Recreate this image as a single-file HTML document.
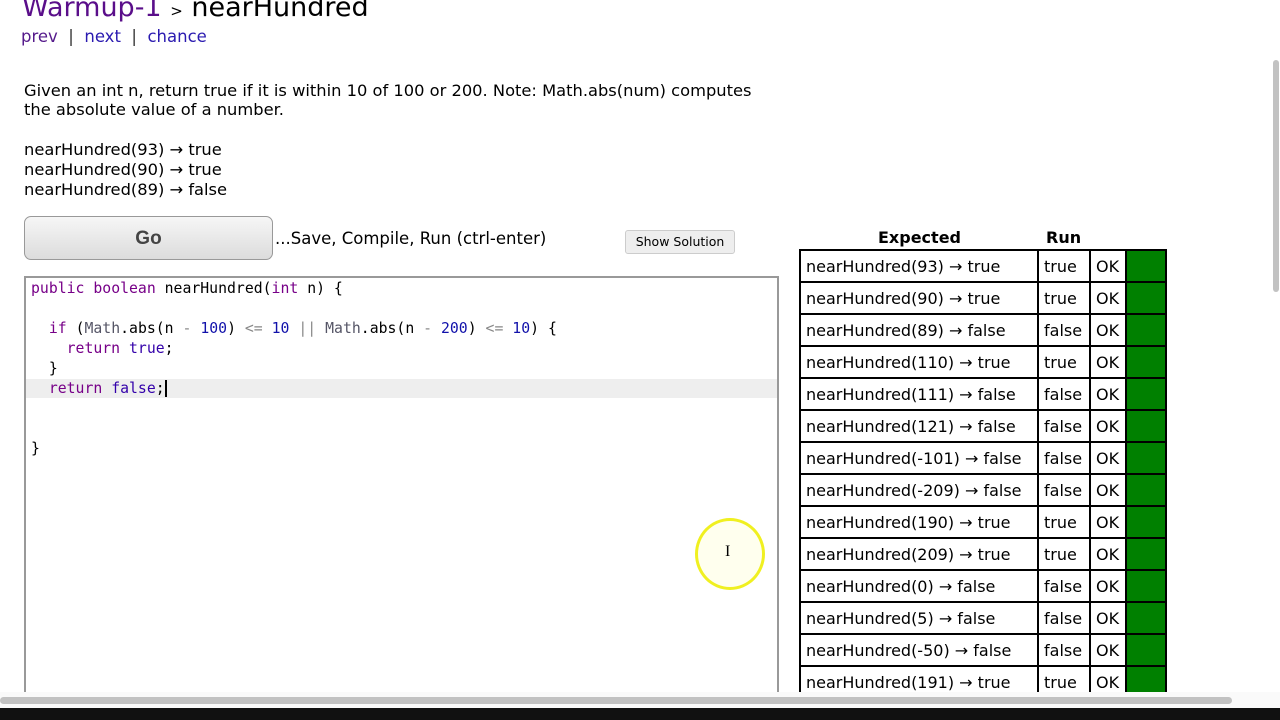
<!DOCTYPE html>
<html><head><style>
body{margin:0;width:1280px;height:720px;overflow:hidden;background:#fff;font-family:"DejaVu Sans","Liberation Sans",sans-serif;position:relative;color:#000}
.a{position:absolute;white-space:nowrap}
.code{font-family:"DejaVu Sans Mono","Liberation Mono",monospace;font-size:14.8px;color:#000}
.kw{color:#708}.num{color:#11a}.op{color:#888}.bi{color:#30a}.m{color:#556}
table{border-collapse:collapse;position:absolute;left:799px;top:249px;font-size:16px}
td{border:2px solid #000;height:30px;padding:0 5px;white-space:nowrap}
td.g{background:#008000;width:28px}
</style></head><body>
<div class="a" style="left:22px;top:-8px;font-size:27px;color:#5a0e8a">Warmup-1 <span style="font-size:15px;color:#000">&gt;</span> <span style="color:#000">nearHundred</span></div>
<div class="a" style="left:21px;top:27px;font-size:16.5px;color:#333"><span style="color:#551a8b">prev</span> &nbsp;| &nbsp;<span style="color:#2a1ab0">next</span> &nbsp;| &nbsp;<span style="color:#2a1ab0">chance</span></div>
<div class="a" style="left:24px;top:81px;font-size:16.3px;line-height:19px">Given an int n, return true if it is within 10 of 100 or 200. Note: Math.abs(num) computes<br>the absolute value of a number.</div>
<div class="a" style="left:24px;top:140px;font-size:16.3px;line-height:20px">nearHundred(93) → true<br>nearHundred(90) → true<br>nearHundred(89) → false</div>
<div class="a" style="left:24px;top:216px;width:247px;height:42px;border:1px solid #999;border-radius:7px;background:linear-gradient(#f6f6f6,#dcdcdc);text-align:center;line-height:44px;font-family:'Liberation Sans',sans-serif;font-weight:bold;font-size:19px;color:#444">Go</div>
<div class="a" style="left:275px;top:229px;font-size:16.5px">...Save, Compile, Run (ctrl-enter)</div>
<div class="a" style="left:625px;top:230px;width:108px;height:22px;border:1px solid #ccc;border-radius:3px;background:#eee;text-align:center;line-height:22px;font-size:12.5px">Show Solution</div>
<div class="a" style="left:24px;top:276px;width:751px;height:430px;border:2px solid #999;border-bottom:none"></div>
<div class="a" style="left:26px;top:379px;width:751px;height:19px;background:#eee"></div>
<div class="a code" style="left:31px;top:279px;line-height:20px;white-space:pre"><span class="kw">public</span> <span class="kw">boolean</span> nearHundred(<span class="kw">int</span> n) {

  <span class="kw">if</span> (<span class="m">Math</span>.abs(n <span class="op">-</span> <span class="num">100</span>) <span class="op">&lt;=</span> <span class="num">10</span> <span class="op">||</span> <span class="m">Math</span>.abs(n <span class="op">-</span> <span class="num">200</span>) <span class="op">&lt;=</span> <span class="num">10</span>) {
    <span class="kw">return</span> <span class="bi">true</span>;
  }
  <span class="kw">return</span> <span class="bi">false</span>;<span style="border-left:2px solid #000"></span>


}</div>
<div class="a" style="left:878px;top:228px;font-size:16px;font-weight:bold">Expected</div>
<div class="a" style="left:1046px;top:228px;font-size:16px;font-weight:bold">Run</div>
<table>
<tr><td style="width:226px">nearHundred(93) → true</td><td style="width:40px">true</td><td style="width:24px">OK</td><td class="g"></td></tr>
<tr><td>nearHundred(90) → true</td><td>true</td><td>OK</td><td class="g"></td></tr>
<tr><td>nearHundred(89) → false</td><td>false</td><td>OK</td><td class="g"></td></tr>
<tr><td>nearHundred(110) → true</td><td>true</td><td>OK</td><td class="g"></td></tr>
<tr><td>nearHundred(111) → false</td><td>false</td><td>OK</td><td class="g"></td></tr>
<tr><td>nearHundred(121) → false</td><td>false</td><td>OK</td><td class="g"></td></tr>
<tr><td>nearHundred(-101) → false</td><td>false</td><td>OK</td><td class="g"></td></tr>
<tr><td>nearHundred(-209) → false</td><td>false</td><td>OK</td><td class="g"></td></tr>
<tr><td>nearHundred(190) → true</td><td>true</td><td>OK</td><td class="g"></td></tr>
<tr><td>nearHundred(209) → true</td><td>true</td><td>OK</td><td class="g"></td></tr>
<tr><td>nearHundred(0) → false</td><td>false</td><td>OK</td><td class="g"></td></tr>
<tr><td>nearHundred(5) → false</td><td>false</td><td>OK</td><td class="g"></td></tr>
<tr><td>nearHundred(-50) → false</td><td>false</td><td>OK</td><td class="g"></td></tr>
<tr><td>nearHundred(191) → true</td><td>true</td><td>OK</td><td class="g"></td></tr>
</table>
<div class="a" style="left:695px;top:518px;width:64px;height:66px;border:3px solid #f0f020;border-radius:50%;background:rgba(255,255,200,0.3)"></div>
<div class="a" style="left:725px;top:543px;font-size:16px;font-family:'Liberation Serif',serif">I</div>
<div class="a" style="left:0;top:692px;width:1280px;height:16px;background:#fafafa"></div>
<div class="a" style="left:0;top:697px;width:1232px;height:7px;background:#c2c2c2;border-radius:4px"></div>
<div class="a" style="left:1273px;top:60px;width:6px;height:232px;background:#c2c2c2;border-radius:3px"></div>
<div class="a" style="left:0;top:708px;width:1280px;height:12px;background:#111"></div>
</body></html>
